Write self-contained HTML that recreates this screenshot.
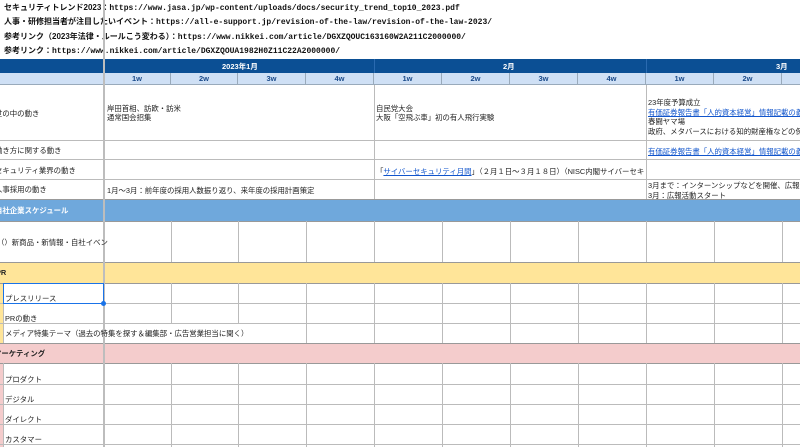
<!DOCTYPE html>
<html><head><meta charset="utf-8"><style>
*{margin:0;padding:0;box-sizing:border-box}
body{width:800px;height:447px;overflow:hidden;background:#fff;position:relative;font-family:"Liberation Sans","Noto Sans CJK JP",sans-serif;font-size:7.4px;color:#222}
.a{position:absolute;white-space:nowrap}
.t{font-weight:bold;font-size:8px;color:#111}
.m{font-family:"Liberation Mono","Noto Sans CJK JP",monospace;font-weight:bold}
.h{background:#cfe0f5;border-right:1px solid #9ab;text-align:center;color:#1a4a8a;font-weight:bold;font-size:7.5px;line-height:11px}
.vl{position:absolute;width:1px;background:#bbb}
.hl{position:absolute;height:1px;background:#bbb;left:0;width:800px}
a{color:#1155cc;text-decoration:underline}
</style></head><body>
<div class="a t" style="left:4px;top:2px">セキュリティトレンド2023：<span class="m">https://www.jasa.jp/wp-content/uploads/docs/security_trend_top10_2023.pdf</span></div>
<div class="a t" style="left:4px;top:16px">人事・研修担当者が注目したいイベント：<span class="m">https://all-e-support.jp/revision-of-the-law/revision-of-the-law-2023/</span></div>
<div class="a t" style="left:4px;top:31px">参考リンク（2023年法律・ルールこう変わる）：<span class="m">https://www.nikkei.com/article/DGXZQOUC163160W2A211C2000000/</span></div>
<div class="a t" style="left:4px;top:45px">参考リンク：<span class="m">https://www.nikkei.com/article/DGXZQOUA1982H0Z11C22A2000000/</span></div>

<div class="a" style="left:0;top:59px;width:800px;height:14px;background:#0b4f94"></div>
<div class="a" style="left:374px;top:59px;width:1px;height:14px;background:#2a6ab0"></div>
<div class="a" style="left:646px;top:59px;width:1px;height:14px;background:#2a6ab0"></div>
<div class="a" style="left:222px;top:61px;color:#fff;font-weight:bold;font-size:7.5px">2023年1月</div>
<div class="a" style="left:503px;top:61px;color:#fff;font-weight:bold;font-size:7.5px">2月</div>
<div class="a" style="left:776px;top:61px;color:#fff;font-weight:bold;font-size:7.5px">3月</div>
<div class="a" style="left:0;top:73px;width:800px;height:12px;background:#cfe0f5;border-bottom:1px solid #9ab"></div>
<div class="a h" style="left:104px;top:73px;width:67px">1w</div>
<div class="a h" style="left:171px;top:73px;width:67px">2w</div>
<div class="a h" style="left:238px;top:73px;width:68px">3w</div>
<div class="a h" style="left:306px;top:73px;width:68px">4w</div>
<div class="a h" style="left:374px;top:73px;width:68px">1w</div>
<div class="a h" style="left:442px;top:73px;width:68px">2w</div>
<div class="a h" style="left:510px;top:73px;width:68px">3w</div>
<div class="a h" style="left:578px;top:73px;width:68px">4w</div>
<div class="a h" style="left:646px;top:73px;width:68px">1w</div>
<div class="a h" style="left:714px;top:73px;width:68px">2w</div>
<div class="a h" style="left:782px;top:73px;width:30px"></div>

<div class="a" style="left:0;top:199px;width:800px;height:22px;background:#6fa8dc"></div>
<div class="a" style="left:0;top:262px;width:800px;height:21px;background:#ffe599"></div>
<div class="a" style="left:0;top:343px;width:800px;height:20px;background:#f4cccc"></div>
<div class="a" style="left:0;top:283px;width:3px;height:60px;background:#ffe599"></div>
<div class="a" style="left:0;top:363px;width:3px;height:84px;background:#f4cccc"></div>

<div class="hl" style="top:140px"></div>
<div class="hl" style="top:159px"></div>
<div class="hl" style="top:179px"></div>
<div class="hl" style="top:199px;background:#999"></div>
<div class="hl" style="top:221px;background:#999"></div>
<div class="hl" style="top:262px;background:#999"></div>
<div class="hl" style="top:283px;background:#999"></div>
<div class="hl" style="top:303px"></div>
<div class="hl" style="top:323px"></div>
<div class="hl" style="top:343px;background:#999"></div>
<div class="hl" style="top:363px;background:#999"></div>
<div class="hl" style="top:384px"></div>
<div class="hl" style="top:404px"></div>
<div class="hl" style="top:424px"></div>
<div class="hl" style="top:444px"></div>

<div class="vl" style="left:374px;top:85px;height:114px"></div>
<div class="vl" style="left:646px;top:85px;height:114px"></div>
<div class="vl" style="left:171px;top:221px;height:41px"></div>
<div class="vl" style="left:238px;top:221px;height:41px"></div>
<div class="vl" style="left:306px;top:221px;height:41px"></div>
<div class="vl" style="left:374px;top:221px;height:41px"></div>
<div class="vl" style="left:442px;top:221px;height:41px"></div>
<div class="vl" style="left:510px;top:221px;height:41px"></div>
<div class="vl" style="left:578px;top:221px;height:41px"></div>
<div class="vl" style="left:646px;top:221px;height:41px"></div>
<div class="vl" style="left:714px;top:221px;height:41px"></div>
<div class="vl" style="left:782px;top:221px;height:41px"></div>

<div class="vl" style="left:171px;top:283px;height:40px"></div>
<div class="vl" style="left:238px;top:283px;height:40px"></div>
<div class="vl" style="left:306px;top:283px;height:60px"></div>
<div class="vl" style="left:374px;top:283px;height:60px"></div>
<div class="vl" style="left:442px;top:283px;height:60px"></div>
<div class="vl" style="left:510px;top:283px;height:60px"></div>
<div class="vl" style="left:578px;top:283px;height:60px"></div>
<div class="vl" style="left:646px;top:283px;height:60px"></div>
<div class="vl" style="left:714px;top:283px;height:60px"></div>
<div class="vl" style="left:782px;top:283px;height:60px"></div>

<div class="vl" style="left:171px;top:363px;height:84px"></div>
<div class="vl" style="left:238px;top:363px;height:84px"></div>
<div class="vl" style="left:306px;top:363px;height:84px"></div>
<div class="vl" style="left:374px;top:363px;height:84px"></div>
<div class="vl" style="left:442px;top:363px;height:84px"></div>
<div class="vl" style="left:510px;top:363px;height:84px"></div>
<div class="vl" style="left:578px;top:363px;height:84px"></div>
<div class="vl" style="left:646px;top:363px;height:84px"></div>
<div class="vl" style="left:714px;top:363px;height:84px"></div>
<div class="vl" style="left:782px;top:363px;height:84px"></div>
<div class="vl" style="left:3px;top:283px;height:60px"></div>
<div class="vl" style="left:3px;top:363px;height:84px"></div>

<div class="a" style="left:103px;top:0;width:2px;height:447px;background:#bdbdbd"></div>

<div class="a" style="left:-5px;top:108px">世の中の動き</div>
<div class="a" style="left:-5px;top:145px">働き方に関する動き</div>
<div class="a" style="left:-5px;top:165px">セキュリティ業界の動き</div>
<div class="a" style="left:-5px;top:184px">人事採用の動き</div>
<div class="a" style="left:-5px;top:205px;color:#fff;font-weight:bold">自社企業スケジュール</div>
<div class="a" style="left:-3px;top:237px">（）新商品・新情報・自社イベン</div>
<div class="a" style="left:-4px;top:268px;font-weight:bold">PR</div>
<div class="a" style="left:5px;top:293px">プレスリリース</div>
<div class="a" style="left:5px;top:313px">PRの動き</div>
<div class="a" style="left:5px;top:328px">メディア特集テーマ（過去の特集を探す＆編集部・広告営業担当に聞く）</div>
<div class="a" style="left:-6px;top:348px;font-weight:bold">マーケティング</div>
<div class="a" style="left:5px;top:374px">プロダクト</div>
<div class="a" style="left:5px;top:394px">デジタル</div>
<div class="a" style="left:5px;top:414px">ダイレクト</div>
<div class="a" style="left:5px;top:434px">カスタマー</div>
<div class="a" style="left:3px;top:283px;width:101px;height:21px;border:1px solid #1a73e8"></div>
<div class="a" style="left:101px;top:301px;width:5px;height:5px;border-radius:50%;background:#1a73e8"></div>

<div class="a" style="left:107px;top:104px;line-height:9px">岸田首相、訪欧・訪米<br>通常国会招集</div>
<div class="a" style="left:376px;top:104px;line-height:9px">自民党大会<br>大阪「空飛ぶ車」初の有人飛行実験</div>
<div class="a" style="left:648px;top:98px;line-height:9.5px">23年度予算成立<br><a>有価証券報告書「人的資本経営」情報記載の義務</a><br>春闘ヤマ場<br>政府、メタバースにおける知的財産権などの保護</div>
<div class="a" style="left:648px;top:146px"><a>有価証券報告書「人的資本経営」情報記載の義務</a></div>
<div class="a" style="left:376px;top:166px">「<a>サイバーセキュリティ月間</a>」（２月１日〜３月１８日）（NISC内閣サイバーセキ</div>
<div class="a" style="left:107px;top:185px">1月〜3月：前年度の採用人数振り返り、来年度の採用計画策定</div>
<div class="a" style="left:648px;top:181px;line-height:9.5px">3月まで：インターンシップなどを開催、広報活<br>3月：広報活動スタート</div>
</body></html>
